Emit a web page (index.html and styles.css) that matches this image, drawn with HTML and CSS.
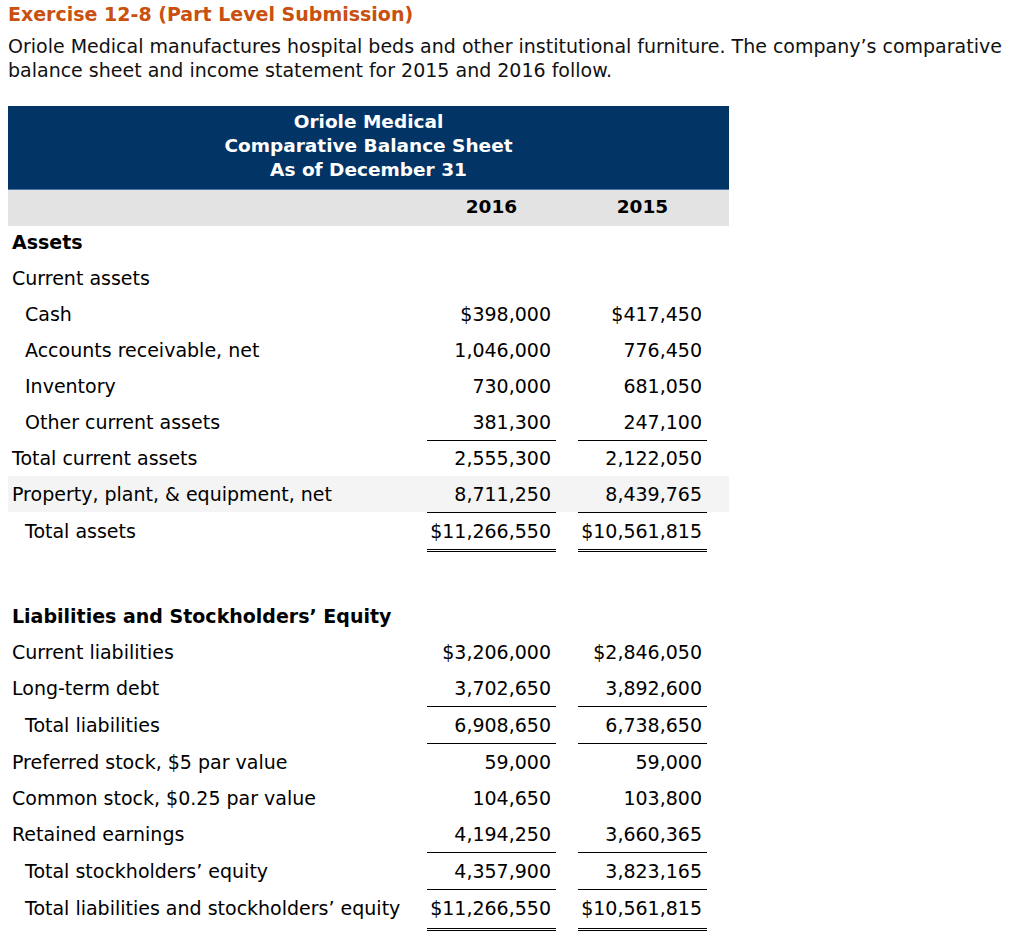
FILE: index.html
```html
<!DOCTYPE html>
<html lang="en">
<head>
<meta charset="utf-8">
<title>Exercise 12-8</title>
<link rel="stylesheet" href="styles.css">
</head>
<body>
<h1 class="title">Exercise 12-8 (Part Level Submission)</h1>
<p class="intro">Oriole Medical manufactures hospital beds and other institutional furniture. The company’s comparative balance sheet and income statement for 2015 and 2016 follow.</p>

<div class="sheet">
  <div class="sheet-head">
    <div>Oriole Medical</div>
    <div>Comparative Balance Sheet</div>
    <div>As of December 31</div>
  </div>
  <div class="row years">
    <div class="lbl"></div>
    <div class="val">2016</div>
    <div class="val">2015</div>
  </div>

  <div class="row first"><div class="lbl strong">Assets</div><div class="val"></div><div class="val"></div></div>
  <div class="row"><div class="lbl">Current assets</div><div class="val"></div><div class="val"></div></div>
  <div class="row"><div class="lbl ind">Cash</div><div class="val">$398,000</div><div class="val">$417,450</div></div>
  <div class="row"><div class="lbl ind">Accounts receivable, net</div><div class="val">1,046,000</div><div class="val">776,450</div></div>
  <div class="row"><div class="lbl ind">Inventory</div><div class="val">730,000</div><div class="val">681,050</div></div>
  <div class="row"><div class="lbl ind">Other current assets</div><div class="val">381,300</div><div class="val">247,100</div></div>
  <div class="row sum tight"><div class="lbl">Total current assets</div><div class="val">2,555,300</div><div class="val">2,122,050</div></div>
  <div class="row shade"><div class="lbl">Property, plant, &amp; equipment, net</div><div class="val">8,711,250</div><div class="val">8,439,765</div></div>
  <div class="row sum grand"><div class="lbl ind">Total assets</div><div class="val">$11,266,550</div><div class="val">$10,561,815</div></div>

  <div class="spacer"></div>

  <div class="row"><div class="lbl strong">Liabilities and Stockholders’ Equity</div><div class="val"></div><div class="val"></div></div>
  <div class="row"><div class="lbl">Current liabilities</div><div class="val">$3,206,000</div><div class="val">$2,846,050</div></div>
  <div class="row"><div class="lbl">Long-term debt</div><div class="val">3,702,650</div><div class="val">3,892,600</div></div>
  <div class="row sum"><div class="lbl ind">Total liabilities</div><div class="val">6,908,650</div><div class="val">6,738,650</div></div>
  <div class="row sum"><div class="lbl">Preferred stock, $5 par value</div><div class="val">59,000</div><div class="val">59,000</div></div>
  <div class="row"><div class="lbl">Common stock, $0.25 par value</div><div class="val">104,650</div><div class="val">103,800</div></div>
  <div class="row"><div class="lbl">Retained earnings</div><div class="val">4,194,250</div><div class="val">3,660,365</div></div>
  <div class="row sum"><div class="lbl ind">Total stockholders’ equity</div><div class="val">4,357,900</div><div class="val">3,823,165</div></div>
  <div class="row sum grand final"><div class="lbl ind">Total liabilities and stockholders’ equity</div><div class="val">$11,266,550</div><div class="val">$10,561,815</div></div>
</div>
</body>
</html>
```

FILE: styles.css
```css
html, body {
  background: #ffffff;
}
body {
  margin: 0;
  padding: 2px 8px 0 8px;
  font-family: "DejaVu Sans", Verdana, sans-serif;
  font-size: 19px;
  color: #000;
}
.title {
  margin: 0;
  font-size: 19px;
  line-height: 24px;
  font-weight: bold;
  color: #c9500f;
}
.intro {
  margin: 8px 0 0 0;
  line-height: 24px;
  color: #111;
}
.sheet {
  width: 721px;
  margin-top: 24px;
}
.sheet-head {
  background: #033466;
  color: #fff;
  font-size: 18.5px;
  font-weight: bold;
  text-align: center;
  line-height: 24px;
  padding: 4px 0 7px 0;
  border-bottom: 1px solid #4d76a3;
}
.row {
  display: grid;
  grid-template-columns: 1fr 129px 129px;
  column-gap: 22px;
  padding-right: 22px;
}
.row > div {
  border-top: 1px solid transparent;
  padding: 7px 0 8px 0;
  line-height: 20px;
  white-space: nowrap;
}
.years {
  background: #e3e3e3;
  font-weight: bold;
  font-size: 18.5px;
}
.years > div {
  padding: 6px 0 9px 0;
}
.first > div {
  padding-top: 5px;
}
.lbl {
  padding-left: 4px !important;
}
.lbl.ind {
  padding-left: 17px !important;
}
.strong {
  font-weight: bold;
}
.val {
  text-align: right;
  padding-right: 5px !important;
}
.years .val {
  text-align: center;
  padding-right: 0 !important;
}
.sum > div {
  padding-top: 8px;
}
.tight > div {
  padding-top: 7px;
}
.sum > .val {
  border-top-color: #000;
}
.grand > .val {
  border-bottom: 3px double #000;
}
.grand > .lbl {
  border-bottom: 3px solid transparent;
}
.final > div {
  padding-bottom: 10px;
}
.shade {
  background: #f4f4f4;
}
.spacer {
  height: 46px;
}
```
